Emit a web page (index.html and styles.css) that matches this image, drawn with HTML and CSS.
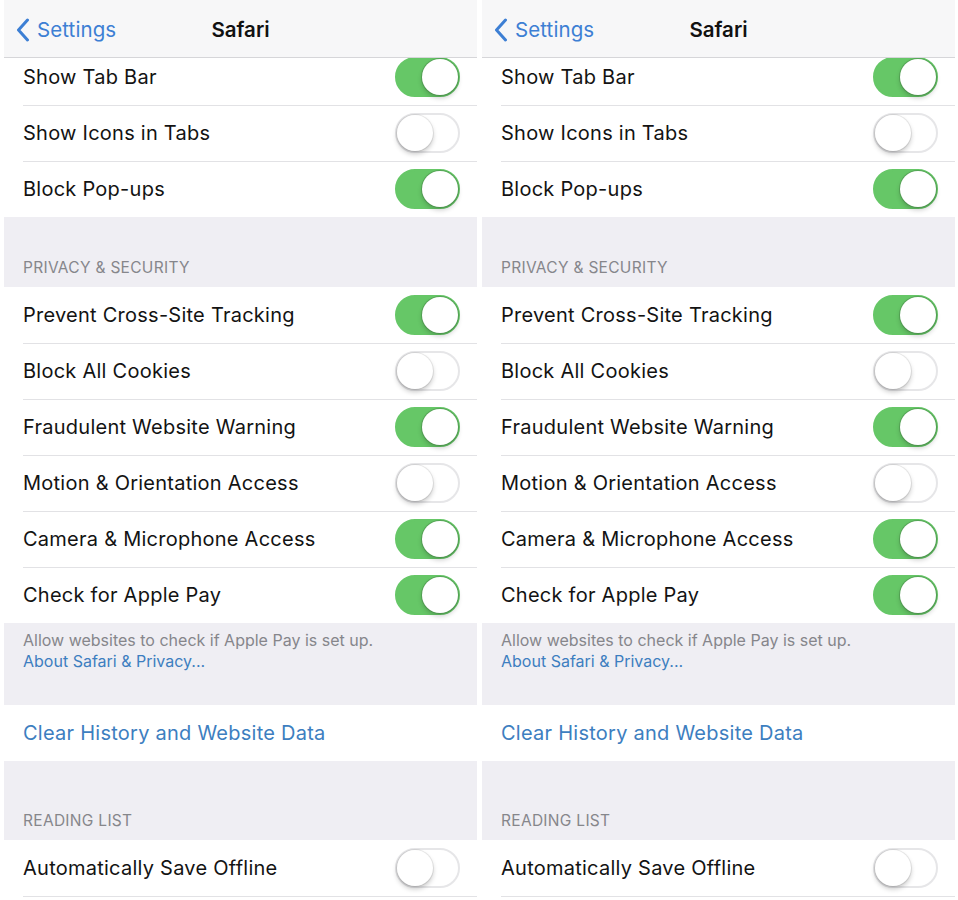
FILE: index.html
```html
<!DOCTYPE html>
<html>
<head>
<meta charset="utf-8">
<link rel="stylesheet" href="styles.css">
</head>
<body>
<div class="screens">
  <div class="phone">
    <div class="navbar">
      <div class="back">
        <svg class="chev" width="14" height="24" viewBox="0 0 14 24"><path d="M11.5 2 L2.5 12 L11.5 22" fill="none" stroke="currentColor" stroke-width="3" stroke-linecap="round" stroke-linejoin="round"/></svg>
        <span>Settings</span>
      </div>
      <div class="title">Safari</div>
    </div>
    <div class="content">
      <div class="group first">
        <div class="row"><span class="label">Show Tab Bar</span><span class="toggle on"></span></div>
        <div class="row"><span class="label">Show Icons in Tabs</span><span class="toggle"></span></div>
        <div class="row"><span class="label">Block Pop-ups</span><span class="toggle on"></span></div>
      </div>
      <div class="header h1">PRIVACY &amp; SECURITY</div>
      <div class="group">
        <div class="row"><span class="label">Prevent Cross-Site Tracking</span><span class="toggle on"></span></div>
        <div class="row"><span class="label">Block All Cookies</span><span class="toggle"></span></div>
        <div class="row"><span class="label">Fraudulent Website Warning</span><span class="toggle on"></span></div>
        <div class="row"><span class="label">Motion &amp; Orientation Access</span><span class="toggle"></span></div>
        <div class="row"><span class="label">Camera &amp; Microphone Access</span><span class="toggle on"></span></div>
        <div class="row"><span class="label">Check for Apple Pay</span><span class="toggle on"></span></div>
      </div>
      <div class="footer">
        <div>Allow websites to check if Apple Pay is set up.</div>
        <div class="link">About Safari &amp; Privacy...</div>
      </div>
      <div class="group">
        <div class="row"><span class="label action">Clear History and Website Data</span></div>
      </div>
      <div class="header h2">READING LIST</div>
      <div class="group">
        <div class="row"><span class="label">Automatically Save Offline</span><span class="toggle"></span></div>
        <div class="row"></div>
      </div>
    </div>
  </div>
  <div class="phone">
    <div class="navbar">
      <div class="back">
        <svg class="chev" width="14" height="24" viewBox="0 0 14 24"><path d="M11.5 2 L2.5 12 L11.5 22" fill="none" stroke="currentColor" stroke-width="3" stroke-linecap="round" stroke-linejoin="round"/></svg>
        <span>Settings</span>
      </div>
      <div class="title">Safari</div>
    </div>
    <div class="content">
      <div class="group first">
        <div class="row"><span class="label">Show Tab Bar</span><span class="toggle on"></span></div>
        <div class="row"><span class="label">Show Icons in Tabs</span><span class="toggle"></span></div>
        <div class="row"><span class="label">Block Pop-ups</span><span class="toggle on"></span></div>
      </div>
      <div class="header h1">PRIVACY &amp; SECURITY</div>
      <div class="group">
        <div class="row"><span class="label">Prevent Cross-Site Tracking</span><span class="toggle on"></span></div>
        <div class="row"><span class="label">Block All Cookies</span><span class="toggle"></span></div>
        <div class="row"><span class="label">Fraudulent Website Warning</span><span class="toggle on"></span></div>
        <div class="row"><span class="label">Motion &amp; Orientation Access</span><span class="toggle"></span></div>
        <div class="row"><span class="label">Camera &amp; Microphone Access</span><span class="toggle on"></span></div>
        <div class="row"><span class="label">Check for Apple Pay</span><span class="toggle on"></span></div>
      </div>
      <div class="footer">
        <div>Allow websites to check if Apple Pay is set up.</div>
        <div class="link">About Safari &amp; Privacy...</div>
      </div>
      <div class="group">
        <div class="row"><span class="label action">Clear History and Website Data</span></div>
      </div>
      <div class="header h2">READING LIST</div>
      <div class="group">
        <div class="row"><span class="label">Automatically Save Offline</span><span class="toggle"></span></div>
        <div class="row"></div>
      </div>
    </div>
  </div>
</div>
</body>
</html>
```
FILE: styles.css
```css
* { box-sizing: border-box; }
html, body { margin: 0; padding: 0; background: #fff; }
body {
  font-family: Inter, "Liberation Sans", sans-serif;
  color: #111;
}
.screens {
  display: flex;
  gap: 5px;
  padding-left: 4px;
  height: 900px;
  overflow: hidden;
}
.phone {
  width: 473px;
  height: 900px;
  display: flex;
  flex-direction: column;
  background: #efeef3;
  overflow: hidden;
}
.navbar {
  height: 58px;
  flex: none;
  background: #f7f7f8;
  border-bottom: 1px solid #d6d6d9;
  display: flex;
  align-items: center;
  justify-content: center;
  position: relative;
  z-index: 1;
}
.back {
  position: absolute;
  left: 12px;
  top: 17px;
  display: flex;
  align-items: center;
  gap: 7px;
  color: #3d7fd4;
  font-size: 20.5px;
  letter-spacing: 0.1px;
}
.title {
  font-size: 20.5px;
  font-weight: 600;
  color: #111;
  margin-top: 2px;
}
.content {
  flex: 1;
  overflow: hidden;
  display: flex;
  flex-direction: column;
}
.group {
  background: #fff;
  flex: none;
}
.group.first { margin-top: -9px; }
.row {
  height: 56px;
  display: flex;
  align-items: center;
  justify-content: space-between;
  padding: 0 17px 0 19px;
  position: relative;
}
.row + .row::before {
  content: "";
  position: absolute;
  left: 19px;
  right: 0;
  top: 0;
  border-top: 1px solid #e2e2e5;
}
.label {
  font-size: 20px;
  letter-spacing: 0.25px;
  color: #131313;
}
.label.action { color: #3d7ec0; }
.toggle {
  width: 65px;
  height: 40px;
  border-radius: 20px;
  background: #fff;
  border: 2px solid #e6e6e8;
  position: relative;
  flex: none;
}
.toggle::after {
  content: "";
  position: absolute;
  top: 0;
  left: 0;
  width: 36px;
  height: 36px;
  border-radius: 50%;
  background: #fff;
  box-shadow: 0 0 0 1px rgba(0,0,0,0.08), 0 3px 5px rgba(0,0,0,0.22);
}
.toggle.on {
  background: #66c767;
  border-color: #66c767;
}
.toggle.on::after {
  left: auto;
  right: 0;
  box-shadow: 0 0 0 1px rgba(60,110,60,0.35), 0 3px 5px rgba(0,0,0,0.2);
}
.header {
  flex: none;
  color: #86868b;
  font-size: 15.5px;
  letter-spacing: 0.3px;
  padding: 0 19px;
  display: flex;
  align-items: flex-end;
}
.header.h1 { height: 70px; padding-bottom: 10px; }
.header.h2 { height: 79px; padding-bottom: 10px; }
.footer {
  flex: none;
  height: 82px;
  padding: 7px 19px 0;
  color: #86868b;
  font-size: 16px;
  line-height: 21px;
  letter-spacing: 0;
}
.footer .link { color: #3d7ec0; }
```
